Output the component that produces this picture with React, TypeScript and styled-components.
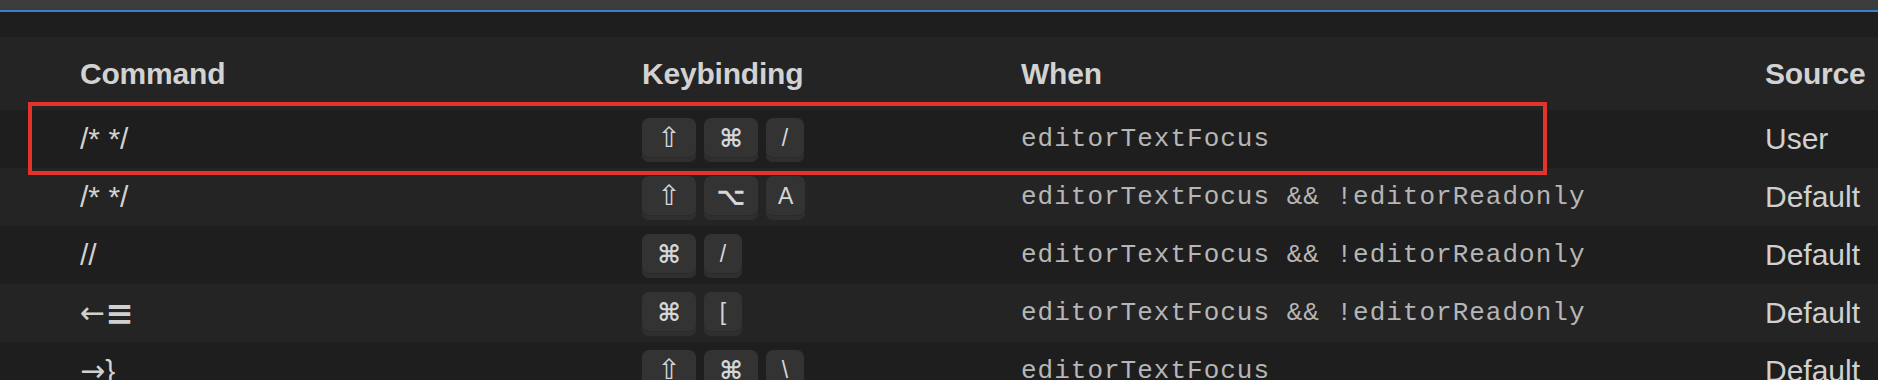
import React from "react";
import styled, { createGlobalStyle } from "styled-components";

const Global = createGlobalStyle`
  html, body { margin: 0; padding: 0; background: #1e1e1e; overflow: hidden; }
  #root { width: 1878px; }
`;

const Page = styled.div`
  width: 1878px;
  display: flex;
  flex-direction: column;
  background: #1e1e1e;
`;

const TopStrip = styled.div`
  height: 10px;
  background: #3c3c3c;
  border-bottom: 2px solid #3a7dd3;
`;

const Spacer = styled.div`
  height: 25px;
  background: #1e1e1e;
`;

const Table = styled.div`
  display: flex;
  flex-direction: column;
`;

const Row = styled.div<{ $light?: boolean; $header?: boolean }>`
  position: relative;
  display: grid;
  grid-template-columns: 562px 379px 744px 1fr;
  align-items: center;
  padding-left: 80px;
  height: ${(p) => (p.$header ? "73px" : "58px")};
  background: ${(p) => (p.$light ? "#242424" : "#1e1e1e")};
`;

const HeadCell = styled.div`
  font-family: "Liberation Sans", Arial, sans-serif;
  font-weight: 700;
  font-size: 30px;
  color: #d2d2d2;
  letter-spacing: -0.2px;
`;

const CommandCell = styled.div`
  font-family: "Liberation Sans", "DejaVu Sans", sans-serif;
  font-size: 30px;
  color: #d0d0d0;
  white-space: pre;
  display: flex;
  align-items: center;
`;

const Sym = styled.span<{ $wide?: boolean }>`
  font-family: "DejaVu Sans", sans-serif;
  font-size: ${(p) => (p.$wide ? "34px" : "30px")};
  font-weight: ${(p) => (p.$wide ? 700 : 400)};
  line-height: 1;
`;

const KeyRow = styled.div`
  display: flex;
  gap: 8px;
  align-items: center;
  margin-top: 2px;
`;

const Key = styled.div<{ $mod?: boolean; $outline?: boolean }>`
  box-sizing: border-box;
  height: 44px;
  min-width: 38px;
  ${(p) => (p.$mod ? "width: 54px;" : "padding: 0 12px;")}
  display: flex;
  align-items: center;
  justify-content: center;
  padding-bottom: 4px;
  border-radius: 7px;
  background: #333333;
  box-shadow: inset 0 -4px 0 #2f2f2f, inset 0 -5px 0 #2a2a2a;
  color: #d6d6d6;
  font-family: ${(p) => (p.$mod ? '"DejaVu Sans", sans-serif' : '"Liberation Sans", sans-serif')};
  font-size: ${(p) => (p.$outline ? "28px" : p.$mod ? "25px" : "23px")};
  font-weight: ${(p) => (p.$mod && !p.$outline ? 700 : 400)};
  line-height: 1;
`;

const WhenCell = styled.div`
  font-family: "Liberation Mono", "DejaVu Sans Mono", monospace;
  font-size: 26px;
  letter-spacing: 1px;
  color: #b6b6b6;
  white-space: pre;
`;

const SourceCell = styled.div`
  font-family: "Liberation Sans", Arial, sans-serif;
  font-size: 30px;
  color: #d0d0d0;
`;

const Highlight = styled.div`
  position: absolute;
  z-index: 2;
  top: -8px;
  left: 28px;
  width: 1519px;
  height: 73px;
  box-sizing: border-box;
  border: 4px solid #e3332a;
  pointer-events: none;
`;

type KeyDef = { label: string; mod?: boolean; outline?: boolean };

type Binding = {
  command: string;
  keys: KeyDef[];
  when: string;
  source: string;
  highlight?: boolean;
};

const SHIFT: KeyDef = { label: "\u21E7", mod: true, outline: true };
const CMD: KeyDef = { label: "\u2318", mod: true };
const OPT: KeyDef = { label: "\u2325", mod: true };

const rows: Binding[] = [
  { command: "/* */", keys: [SHIFT, CMD, { label: "/" }], when: "editorTextFocus", source: "User", highlight: true },
  { command: "/* */", keys: [SHIFT, OPT, { label: "A" }], when: "editorTextFocus && !editorReadonly", source: "Default" },
  { command: "//", keys: [CMD, { label: "/" }], when: "editorTextFocus && !editorReadonly", source: "Default" },
  { command: "\u2190\u2261", keys: [CMD, { label: "[" }], when: "editorTextFocus && !editorReadonly", source: "Default" },
  { command: "\u2192}", keys: [SHIFT, CMD, { label: "\\" }], when: "editorTextFocus", source: "Default" },
];

function renderCommand(text: string) {
  return Array.from(text).map((ch, i) =>
    ch.charCodeAt(0) > 127 ? (
      <Sym key={i} $wide={ch === "\u2261"}>
        {ch}
      </Sym>
    ) : (
      <span key={i}>{ch}</span>
    )
  );
}

export default function App() {
  return (
    <Page>
      <Global />
      <TopStrip />
      <Spacer />
      <Table>
        <Row $header $light>
          <HeadCell>Command</HeadCell>
          <HeadCell>Keybinding</HeadCell>
          <HeadCell>When</HeadCell>
          <HeadCell>Source</HeadCell>
        </Row>
        {rows.map((r, i) => (
          <Row key={i} $light={i % 2 === 1}>
            <CommandCell>{renderCommand(r.command)}</CommandCell>
            <KeyRow>
              {r.keys.map((k, j) => (
                <Key key={j} $mod={k.mod} $outline={k.outline}>
                  {k.label}
                </Key>
              ))}
            </KeyRow>
            <WhenCell>{r.when}</WhenCell>
            <SourceCell>{r.source}</SourceCell>
            {r.highlight && <Highlight />}
          </Row>
        ))}
      </Table>
    </Page>
  );
}
